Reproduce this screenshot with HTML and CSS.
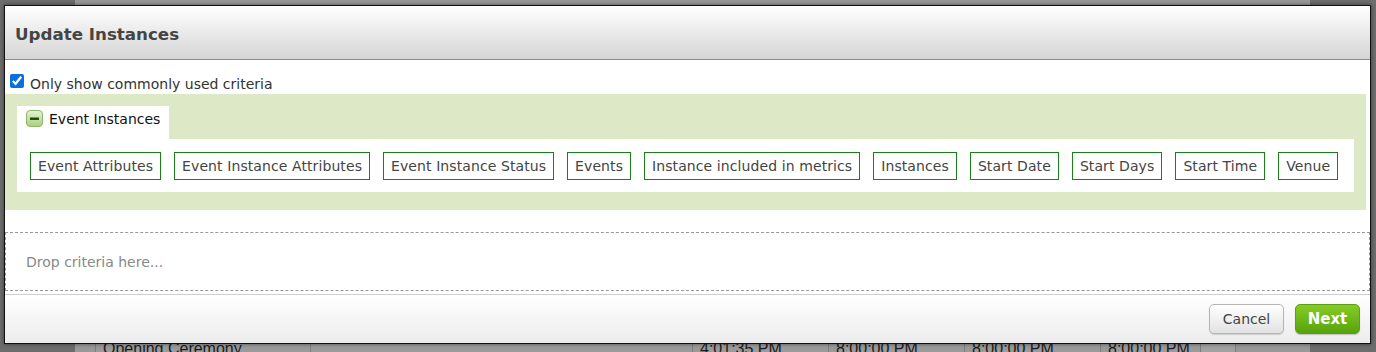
FILE: index.html
```html
<!DOCTYPE html>
<html>
<head>
<meta charset="utf-8">
<title>Update Instances</title>
<link rel="stylesheet" href="styles.css">
</head>
<body>
<div class="page">
  <div class="page-content">
    <div class="bg-table">
      <div class="bg-cell c1">Opening Ceremony</div>
      <div class="bg-cell c2"></div>
      <div class="bg-cell c3">4:01:35 PM</div>
      <div class="bg-cell c3">8:00:00 PM</div>
      <div class="bg-cell c3">8:00:00 PM</div>
      <div class="bg-cell c4">8:00:00 PM</div>
      <div class="bg-cell c5"></div>
    </div>
  </div>
</div>

<div class="modal">
  <div class="modal-header">
    <h1 class="modal-title">Update Instances</h1>
  </div>
  <div class="modal-body">
    <label class="common-row">
      <input type="checkbox" class="common-check" checked>
      <span>Only show commonly used criteria</span>
    </label>
    <div class="group">
      <div class="group-tab">
        <span class="toggle-icon">
          <svg width="17" height="17" viewBox="0 0 17 17">
            <defs>
              <linearGradient id="tg" x1="0" y1="0" x2="0" y2="1">
                <stop offset="0" stop-color="#e6f3cf"/>
                <stop offset="1" stop-color="#a9cf7e"/>
              </linearGradient>
            </defs>
            <rect x="0.5" y="0.5" width="16" height="16" rx="3.5" fill="url(#tg)" stroke="#8fb56b"/>
            <rect x="4" y="7.5" width="9" height="2.5" fill="#1f4f10"/>
          </svg>
        </span>
        <span class="group-name">Event Instances</span>
      </div>
      <div class="group-items">
        <span class="criterion">Event Attributes</span>
        <span class="criterion">Event Instance Attributes</span>
        <span class="criterion">Event Instance Status</span>
        <span class="criterion">Events</span>
        <span class="criterion">Instance included in metrics</span>
        <span class="criterion">Instances</span>
        <span class="criterion">Start Date</span>
        <span class="criterion">Start Days</span>
        <span class="criterion">Start Time</span>
        <span class="criterion">Venue</span>
      </div>
    </div>
    <div class="drop-zone">Drop criteria here...</div>
  </div>
  <div class="modal-footer">
    <button class="btn btn-cancel">Cancel</button>
    <button class="btn btn-next">Next</button>
  </div>
</div>
</body>
</html>
```

FILE: styles.css
```css
html, body {
  margin: 0;
  padding: 0;
}
body {
  width: 1376px;
  height: 352px;
  overflow: hidden;
  background: #6d6d6d;
  font-family: "DejaVu Sans", Verdana, sans-serif;
  position: relative;
}

/* dimmed page behind the dialog */
.page {
  height: 352px;
  padding-left: 75px;
  display: flex;
}
.page-content {
  width: 1235px;
  height: 352px;
  background: #999999;
  display: flex;
  flex-direction: column;
  justify-content: flex-end;
}
.bg-table {
  margin-left: 20px;
  display: flex;
  height: 12px;
  overflow: hidden;
}
.bg-cell {
  border-left: 1px solid #7d7d7d;
  color: #1c1c1c;
  font-family: "Liberation Sans", Arial, sans-serif;
  font-size: 16px;
  line-height: 18px;
  padding-left: 7px;
  box-sizing: border-box;
  background: #9b9b9b;
}
.c1 { width: 215px; }
.c2 { width: 382px; }
.c3 { width: 136px; }
.c4 { width: 100px; }
.c5 { width: 36px; background: #a2a2a2; border-right: 1px solid #7d7d7d; }

/* dialog */
.modal {
  position: absolute;
  left: 4px;
  top: 5px;
  width: 1365px;
  height: 337px;
  border: 1px solid #111;
  background: #fff;
  box-shadow: 0 0 4px rgba(0,0,0,0.5);
  display: flex;
  flex-direction: column;
}
.modal-header {
  height: 53px;
  border-bottom: 1px solid #8c8c8c;
  background: linear-gradient(#ffffff, #d5d5d5);
  display: flex;
  align-items: center;
  padding-left: 10px;
}
.modal-title {
  margin: 0;
  font-size: 16.7px;
  font-weight: bold;
  color: #444;
  position: relative;
  top: 1px;
}
.modal-body {
  flex: 1;
  display: flex;
  flex-direction: column;
}
.common-row {
  display: flex;
  align-items: center;
  height: 26px;
  padding-top: 8px;
  font-size: 14px;
  color: #333;
}
.common-check {
  width: 14px;
  height: 14px;
  margin: 0 6px 0 5px;
  accent-color: #0b6fe0;
}
.common-row span {
  position: relative;
  top: 3px;
}

.group {
  background: #dde9c6;
  margin-right: 4px;
  padding: 12px 12px 18px 12px;
}
.group-tab {
  display: inline-flex;
  align-items: flex-start;
  height: 33px;
  box-sizing: border-box;
  background: #fff;
  padding: 4px 9px 0 9px;
  gap: 6px;
  vertical-align: top;
}
.toggle-icon {
  display: flex;
  width: 17px;
  height: 17px;
}
.group-name {
  font-size: 14px;
  line-height: 17px;
  margin-top: 1px;
  color: #111;
}
.group-items {
  background: #fff;
  padding: 13px 13px 12px 13px;
  display: flex;
  gap: 13px;
}
.criterion {
  display: inline-flex;
  align-items: center;
  height: 26px;
  border: 1px solid #1b7f1b;
  padding: 0 7px;
  font-size: 14px;
  letter-spacing: 0.09px;
  color: #444;
  white-space: nowrap;
}

.drop-zone {
  margin-top: 22px;
  height: 57px;
  border: 1px dashed #999;
  display: flex;
  align-items: center;
  padding-left: 20px;
  font-size: 14px;
  color: #888;
}

.modal-footer {
  height: 48px;
  margin-top: 2px;
  border-top: 1px solid #cfcfcf;
  background: linear-gradient(#ffffff, #ececec);
  display: flex;
  justify-content: flex-end;
  align-items: center;
  gap: 11px;
  padding-right: 10px;
}
.btn {
  height: 30px;
  border-radius: 5px;
  font-family: "DejaVu Sans", Verdana, sans-serif;
  font-size: 14px;
  cursor: pointer;
}
.btn-cancel {
  width: 75px;
  border: 1px solid #b5b5b5;
  background: linear-gradient(#ffffff, #e2e2e2);
  color: #444;
  box-shadow: 0 1px 1px rgba(0,0,0,0.15);
}
.btn-next {
  width: 65px;
  border: 1px solid #5c9f17;
  background: linear-gradient(#86cc26, #57a30c);
  color: #fff;
  font-weight: bold;
  font-size: 15px;
  box-shadow: 0 1px 1px rgba(0,0,0,0.2);
}
```
